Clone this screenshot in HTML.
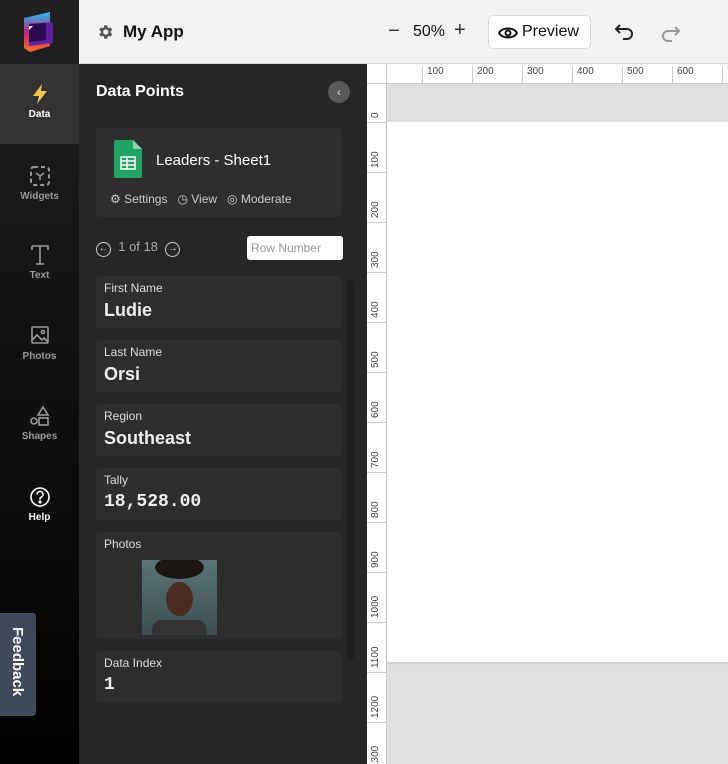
<!DOCTYPE html><html><head><style>
*{box-sizing:border-box;margin:0;padding:0}
html{overflow:hidden;width:728px;height:764px}
body{width:728px;height:764px;overflow:hidden;font-family:"Liberation Sans",sans-serif;background:#e0e0e0;position:relative}
.rail{position:absolute;left:0;top:0;width:79px;height:764px;background:linear-gradient(#202020,#000)}
.ri{position:absolute;left:0;width:79px;text-align:center;color:#9a9a9a;font-size:10px;font-weight:bold}
.ri svg{display:block;margin:0 auto 4px}
.top{position:absolute;left:79px;top:0;width:649px;height:64px;background:#f3f3f3;border-bottom:1px solid #ddd}
.panel{position:absolute;left:79px;top:64px;width:288px;height:700px;background:#262626}
.card{position:absolute;left:17px;width:246px;background:#2d2d2d;border-radius:4px;color:#ddd}
.card .l{position:absolute;left:8px;top:5px;font-size:12px;color:#ddd}
.card .v{position:absolute;left:8px;top:24px;font-size:18px;font-weight:bold;color:#eee}
.mono{font-family:"Liberation Mono",monospace!important}
.hr{position:absolute;top:64px;left:367px;width:361px;height:20px;background:#fff;border-bottom:1px solid #ccc;overflow:hidden}
.hr span{position:absolute;top:2px;font-size:10px;color:#444;border-left:1px solid #ccc;padding-left:4px;height:18px}
.vr{position:absolute;left:367px;top:84px;width:20px;height:680px;background:#fff;border-right:1px solid #ccc;overflow:hidden}
.vr span{position:absolute;left:0;width:20px;border-bottom:1px solid #ccc;height:50px}
.vr i{position:absolute;bottom:4px;font-style:normal;font-size:10px;color:#444;transform:rotate(-90deg);transform-origin:left bottom;white-space:nowrap;left:14px}
</style></head><body>
<div class="rail">
<svg style="position:absolute;left:22px;top:12px" width="34" height="40" viewBox="0 0 34 40"><defs><linearGradient id="g" x1="0" y1="0" x2="0" y2="1"><stop offset="0" stop-color="#20c0f0"/><stop offset=".5" stop-color="#c02080"/><stop offset="1" stop-color="#ff7020"/></linearGradient></defs><path d="M2 6 L28 0 L28 34 L8 40 L2 36Z" fill="url(#g)"/><path d="M7 12 L31 10 L31 31 L7 34Z" fill="#6020a0"/><path d="M7 12 L24 11 L24 28 L7 30Z" fill="#2a0a50"/><path d="M7 14 L11 14 L7 18Z" fill="#fff"/></svg>
<div style="position:absolute;left:0;top:64px;width:79px;height:80px;background:#333"></div>
<div class="ri" style="top:83px;color:#fff"><svg width="20" height="22" viewBox="0 0 20 22"><path d="M12 1 L3 13 L9 13 L7 21 L17 8 L11 8Z" fill="#f5c542"/></svg>Data</div>
<div class="ri" style="top:165px"><svg width="22" height="22" viewBox="0 0 22 22" fill="none" stroke="#9a9a9a" stroke-width="2" stroke-dasharray="4 3"><rect x="2" y="2" width="18" height="18" rx="3"/><path d="M7 8 L11 11 L15 8 M11 11 V15" stroke-dasharray="none" stroke-width="1.5"/></svg>Widgets</div>
<div class="ri" style="top:244px"><svg width="20" height="22" viewBox="0 0 20 22"><path d="M2 2H18V6M2 2V6M10 2V20M6 20H14" stroke="#9a9a9a" stroke-width="1.6" fill="none"/></svg>Text</div>
<div class="ri" style="top:325px"><svg width="20" height="22" viewBox="0 0 20 22" fill="none" stroke="#9a9a9a" stroke-width="1.6"><rect x="2" y="2" width="16" height="16" rx="1"/><path d="M2 15 L7 10 L12 15 L14 13 L18 17"/><circle cx="13" cy="7" r="1.5"/></svg>Photos</div>
<div class="ri" style="top:405px"><svg width="22" height="22" viewBox="0 0 22 22" fill="none" stroke="#9a9a9a" stroke-width="1.6"><path d="M14 2 L19 10 L9 10Z"/><circle cx="5" cy="16" r="3"/><rect x="10" y="13" width="9" height="7"/></svg>Shapes</div>
<div class="ri" style="top:486px;color:#fff"><svg width="22" height="22" viewBox="0 0 22 22" fill="none" stroke="#fff" stroke-width="1.6"><circle cx="11" cy="11" r="9"/><path d="M8 8.5a3 3 0 1 1 4 2.8c-1 .4-1 1-1 2.2"/><circle cx="11" cy="16" r=".8" fill="#fff"/></svg>Help</div>
<div style="position:absolute;left:0;top:613px;width:36px;height:103px;background:#3e4a5c;border-radius:0 3px 3px 0"><div style="position:absolute;left:26px;top:14px;transform:rotate(90deg);transform-origin:left top;color:#fff;font-size:15px;font-weight:bold;white-space:nowrap">Feedback</div></div>
</div>
<div class="top">
<svg style="position:absolute;left:17px;top:23px" width="18" height="18" viewBox="0 0 24 24"><path fill="#555" d="M19.4 13a7.5 7.5 0 0 0 0-2l2.1-1.6-2-3.5-2.5 1a7.5 7.5 0 0 0-1.7-1L15 3h-4l-.4 2.9a7.5 7.5 0 0 0-1.7 1l-2.5-1-2 3.5L6.5 11a7.5 7.5 0 0 0 0 2l-2.1 1.6 2 3.5 2.5-1a7.5 7.5 0 0 0 1.700 1L11 21h4l.4-2.9a7.5 7.5 0 0 0 1.7-1l2.5 1 2-3.5zM13 15.5a3.5 3.5 0 1 1 0-7 3.5 3.5 0 0 1 0 7z"/></svg>
<div style="position:absolute;left:44px;top:22px;font-size:17px;font-weight:bold;color:#111">My App</div>
<div style="position:absolute;left:309px;top:20px;font-size:20px;color:#333">−</div>
<div style="position:absolute;left:334px;top:23px;font-size:16px;color:#111">50%</div>
<div style="position:absolute;left:375px;top:19px;font-size:20px;color:#333">+</div>
<div style="position:absolute;left:409px;top:15px;width:103px;height:34px;background:#fff;border:1px solid #ddd;border-radius:5px"><svg style="position:absolute;left:9px;top:9px" width="20" height="16" viewBox="0 0 20 16" fill="none" stroke="#111" stroke-width="2"><path d="M1 8C4 2 16 2 19 8C16 14 4 14 1 8Z"/><circle cx="10" cy="8" r="2.5"/></svg><span style="position:absolute;left:33px;top:7px;font-size:16px;color:#111">Preview</span></div>
<svg style="position:absolute;left:535px;top:23px" width="20" height="18" viewBox="0 0 20 18" fill="none" stroke="#222" stroke-width="2"><path d="M6 2 L2 6 L6 10 M2 6 H13 a5 5 0 0 1 0 10 H9"/></svg>
<svg style="position:absolute;left:582px;top:25px" width="20" height="18" viewBox="0 0 20 18" fill="none" stroke="#999" stroke-width="2"><path d="M14 2 L18 6 L14 10 M18 6 H7 a5 5 0 0 0 0 10 H11"/></svg>
</div>
<div class="panel">
<div style="position:absolute;left:17px;top:19px;font-size:16px;font-weight:bold;color:#fff">Data Points</div>
<div style="position:absolute;left:249px;top:17px;width:22px;height:22px;border-radius:50%;background:#5a5a5a;color:#ddd;font-size:12px;text-align:center;line-height:22px">‹</div>
<div class="card" style="top:64px;height:89px;background:#2e2e2e">
<svg style="position:absolute;left:18px;top:12px" width="28" height="38" viewBox="0 0 28 38"><path d="M2 0H19L28 9V36a2 2 0 0 1-2 2H2a2 2 0 0 1-2-2V2a2 2 0 0 1 2-2Z" fill="#20a464"/><path d="M19 0V9H28Z" fill="#8ed1b1"/><rect x="7" y="17" width="14" height="12" fill="none" stroke="#fff" stroke-width="1.5"/><path d="M7 21H21M7 25H21M13 17V29" stroke="#fff" stroke-width="1.5"/></svg>
<div style="position:absolute;left:60px;top:24px;font-size:15px;color:#fff">Leaders - Sheet1</div>
<div style="position:absolute;left:14px;top:64px;font-size:12px;color:#ccc;white-space:nowrap">⚙ Settings &nbsp;&nbsp;◷ View &nbsp;&nbsp;◎ Moderate</div>
</div>
<div style="position:absolute;left:17px;top:175px;font-size:13px;color:#aaa;white-space:nowrap"><span style="display:inline-block;width:15px;height:15px;border:1.5px solid #ccc;border-radius:50%;font-size:10px;text-align:center;line-height:12px;color:#ccc">←</span>&nbsp; 1 of 18 &nbsp;<span style="display:inline-block;width:15px;height:15px;border:1.5px solid #ccc;border-radius:50%;font-size:10px;text-align:center;line-height:12px;color:#ccc">→</span></div>
<div style="position:absolute;left:168px;top:172px;width:96px;height:24px;background:#fff;border-radius:3px;font-size:12px;color:#999;padding:5px 4px">Row Number</div>
<div style="position:absolute;left:267px;top:216px;width:8px;height:380px;background:#1e1e1e;border-radius:4px"></div>
<div class="card" style="top:212px;height:52px"><div class="l">First Name</div><div class="v">Ludie</div></div>
<div class="card" style="top:276px;height:52px"><div class="l">Last Name</div><div class="v">Orsi</div></div>
<div class="card" style="top:340px;height:52px"><div class="l">Region</div><div class="v">Southeast</div></div>
<div class="card" style="top:404px;height:52px"><div class="l">Tally</div><div class="v mono">18,528.00</div></div>
<div class="card" style="top:468px;height:107px"><div class="l">Photos</div>
<div style="position:absolute;left:46px;top:28px;width:75px;height:75px;overflow:hidden;background:radial-gradient(ellipse 22px 28px at 50% 52%,#4a2c20 60%,transparent 62%),radial-gradient(ellipse 30px 14px at 50% 10%,#1a1512 80%,transparent 82%),linear-gradient(#5a7478,#3c4e52)"><div style="position:absolute;left:10px;top:60px;width:55px;height:15px;background:#333;border-radius:10px 10px 0 0"></div></div></div>
<div class="card" style="top:587px;height:52px"><div class="l">Data Index</div><div class="v mono">1</div></div>
</div>
<div class="hr"><span style="left:55px">100</span><span style="left:105px">200</span><span style="left:155px">300</span><span style="left:205px">400</span><span style="left:255px">500</span><span style="left:305px">600</span><span style="left:355px">7</span></div>
<div style="position:absolute;left:367px;top:64px;width:20px;height:20px;background:#fff;border-right:1px solid #ccc;border-bottom:1px solid #ccc"></div>
<div class="vr">
<span style="top:-11px"><i>0</i></span><span style="top:39px"><i>100</i></span><span style="top:89px"><i>200</i></span><span style="top:139px"><i>300</i></span><span style="top:189px"><i>400</i></span><span style="top:239px"><i>500</i></span><span style="top:289px"><i>600</i></span><span style="top:339px"><i>700</i></span><span style="top:389px"><i>800</i></span><span style="top:439px"><i>900</i></span><span style="top:489px"><i>1000</i></span><span style="top:539px"><i>1100</i></span><span style="top:589px"><i>1200</i></span><span style="top:639px"><i>1300</i></span>
</div>
<div style="position:absolute;left:387px;top:122px;width:341px;height:540px;background:#fff;box-shadow:0 1px 2px rgba(0,0,0,.15)"></div>
</body></html>
